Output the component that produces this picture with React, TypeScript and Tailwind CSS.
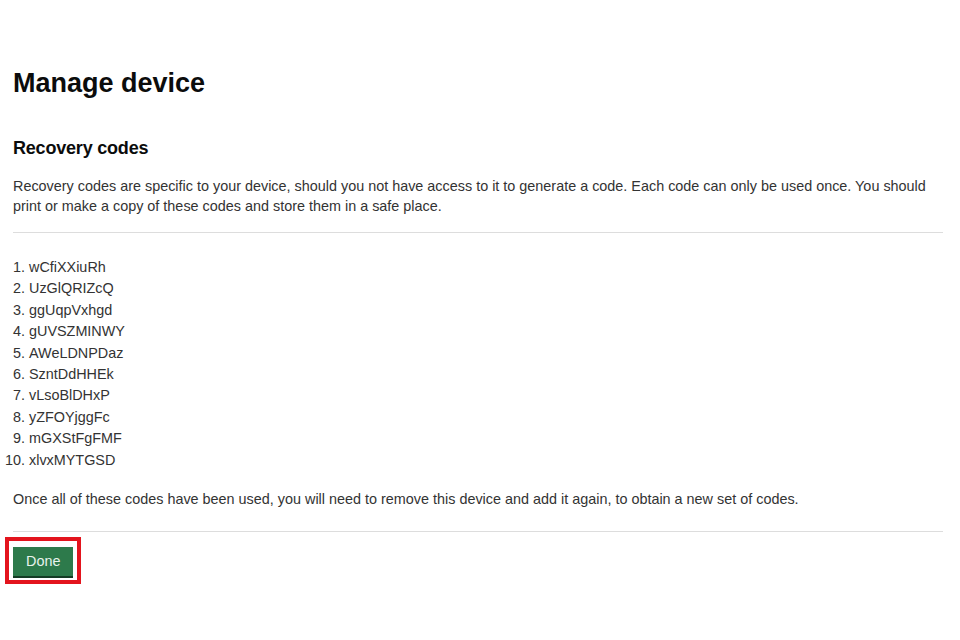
import React from 'react';

const codes = [
  'wCfiXXiuRh',
  'UzGlQRIZcQ',
  'ggUqpVxhgd',
  'gUVSZMINWY',
  'AWeLDNPDaz',
  'SzntDdHHEk',
  'vLsoBlDHxP',
  'yZFOYjggFc',
  'mGXStFgFMF',
  'xlvxMYTGSD',
];

const App = () => {
  return (
    <div className="min-h-[640px] w-[960px] bg-white text-[#0b0c0c] font-['Liberation_Sans',Arial,sans-serif]">
      <div className="px-[13px] pt-[66px]">
        <h1 className="text-[27px] font-bold leading-[34px]">Manage device</h1>

        <h2 className="mt-[36px] text-[18px] font-bold leading-[24px] tracking-[-0.2px]">Recovery codes</h2>
        <p className="mt-[16px] text-[14.4px] leading-[20px] text-[#333]">
          Recovery codes are specific to your device, should you not have access to it to generate a code. Each code can only be used once. You should print or make a copy of these codes and store them in a safe place.
        </p>

        <hr className="mt-[16px] mr-[4px] border-t border-[#ddd]" />

        <ol className="mt-[24px] list-decimal pl-[16px] text-[14.4px] leading-[21.4px] text-[#333]">
          {codes.map((code) => (
            <li key={code}>{code}</li>
          ))}
        </ol>

        <p className="mt-[18px] text-[14.4px] leading-[20px] text-[#333]">
          Once all of these codes have been used, you will need to remove this device and add it again, to obtain a new set of codes.
        </p>

        <hr className="mt-[22px] mr-[4px] border-t border-[#ddd]" />

        <div className="-ml-[8px] mt-[5px] inline-block border-[4px] border-[#e3141d] px-[4px] pt-[6px] pb-[4px]">
          <button className="block bg-[#2d7a4b] px-[13px] py-[6px] text-[14.4px] leading-[17px] text-[#e8f3ec] shadow-[0_2px_0_#143c24]">
            Done
          </button>
        </div>
      </div>
    </div>
  );
};

export default App;
